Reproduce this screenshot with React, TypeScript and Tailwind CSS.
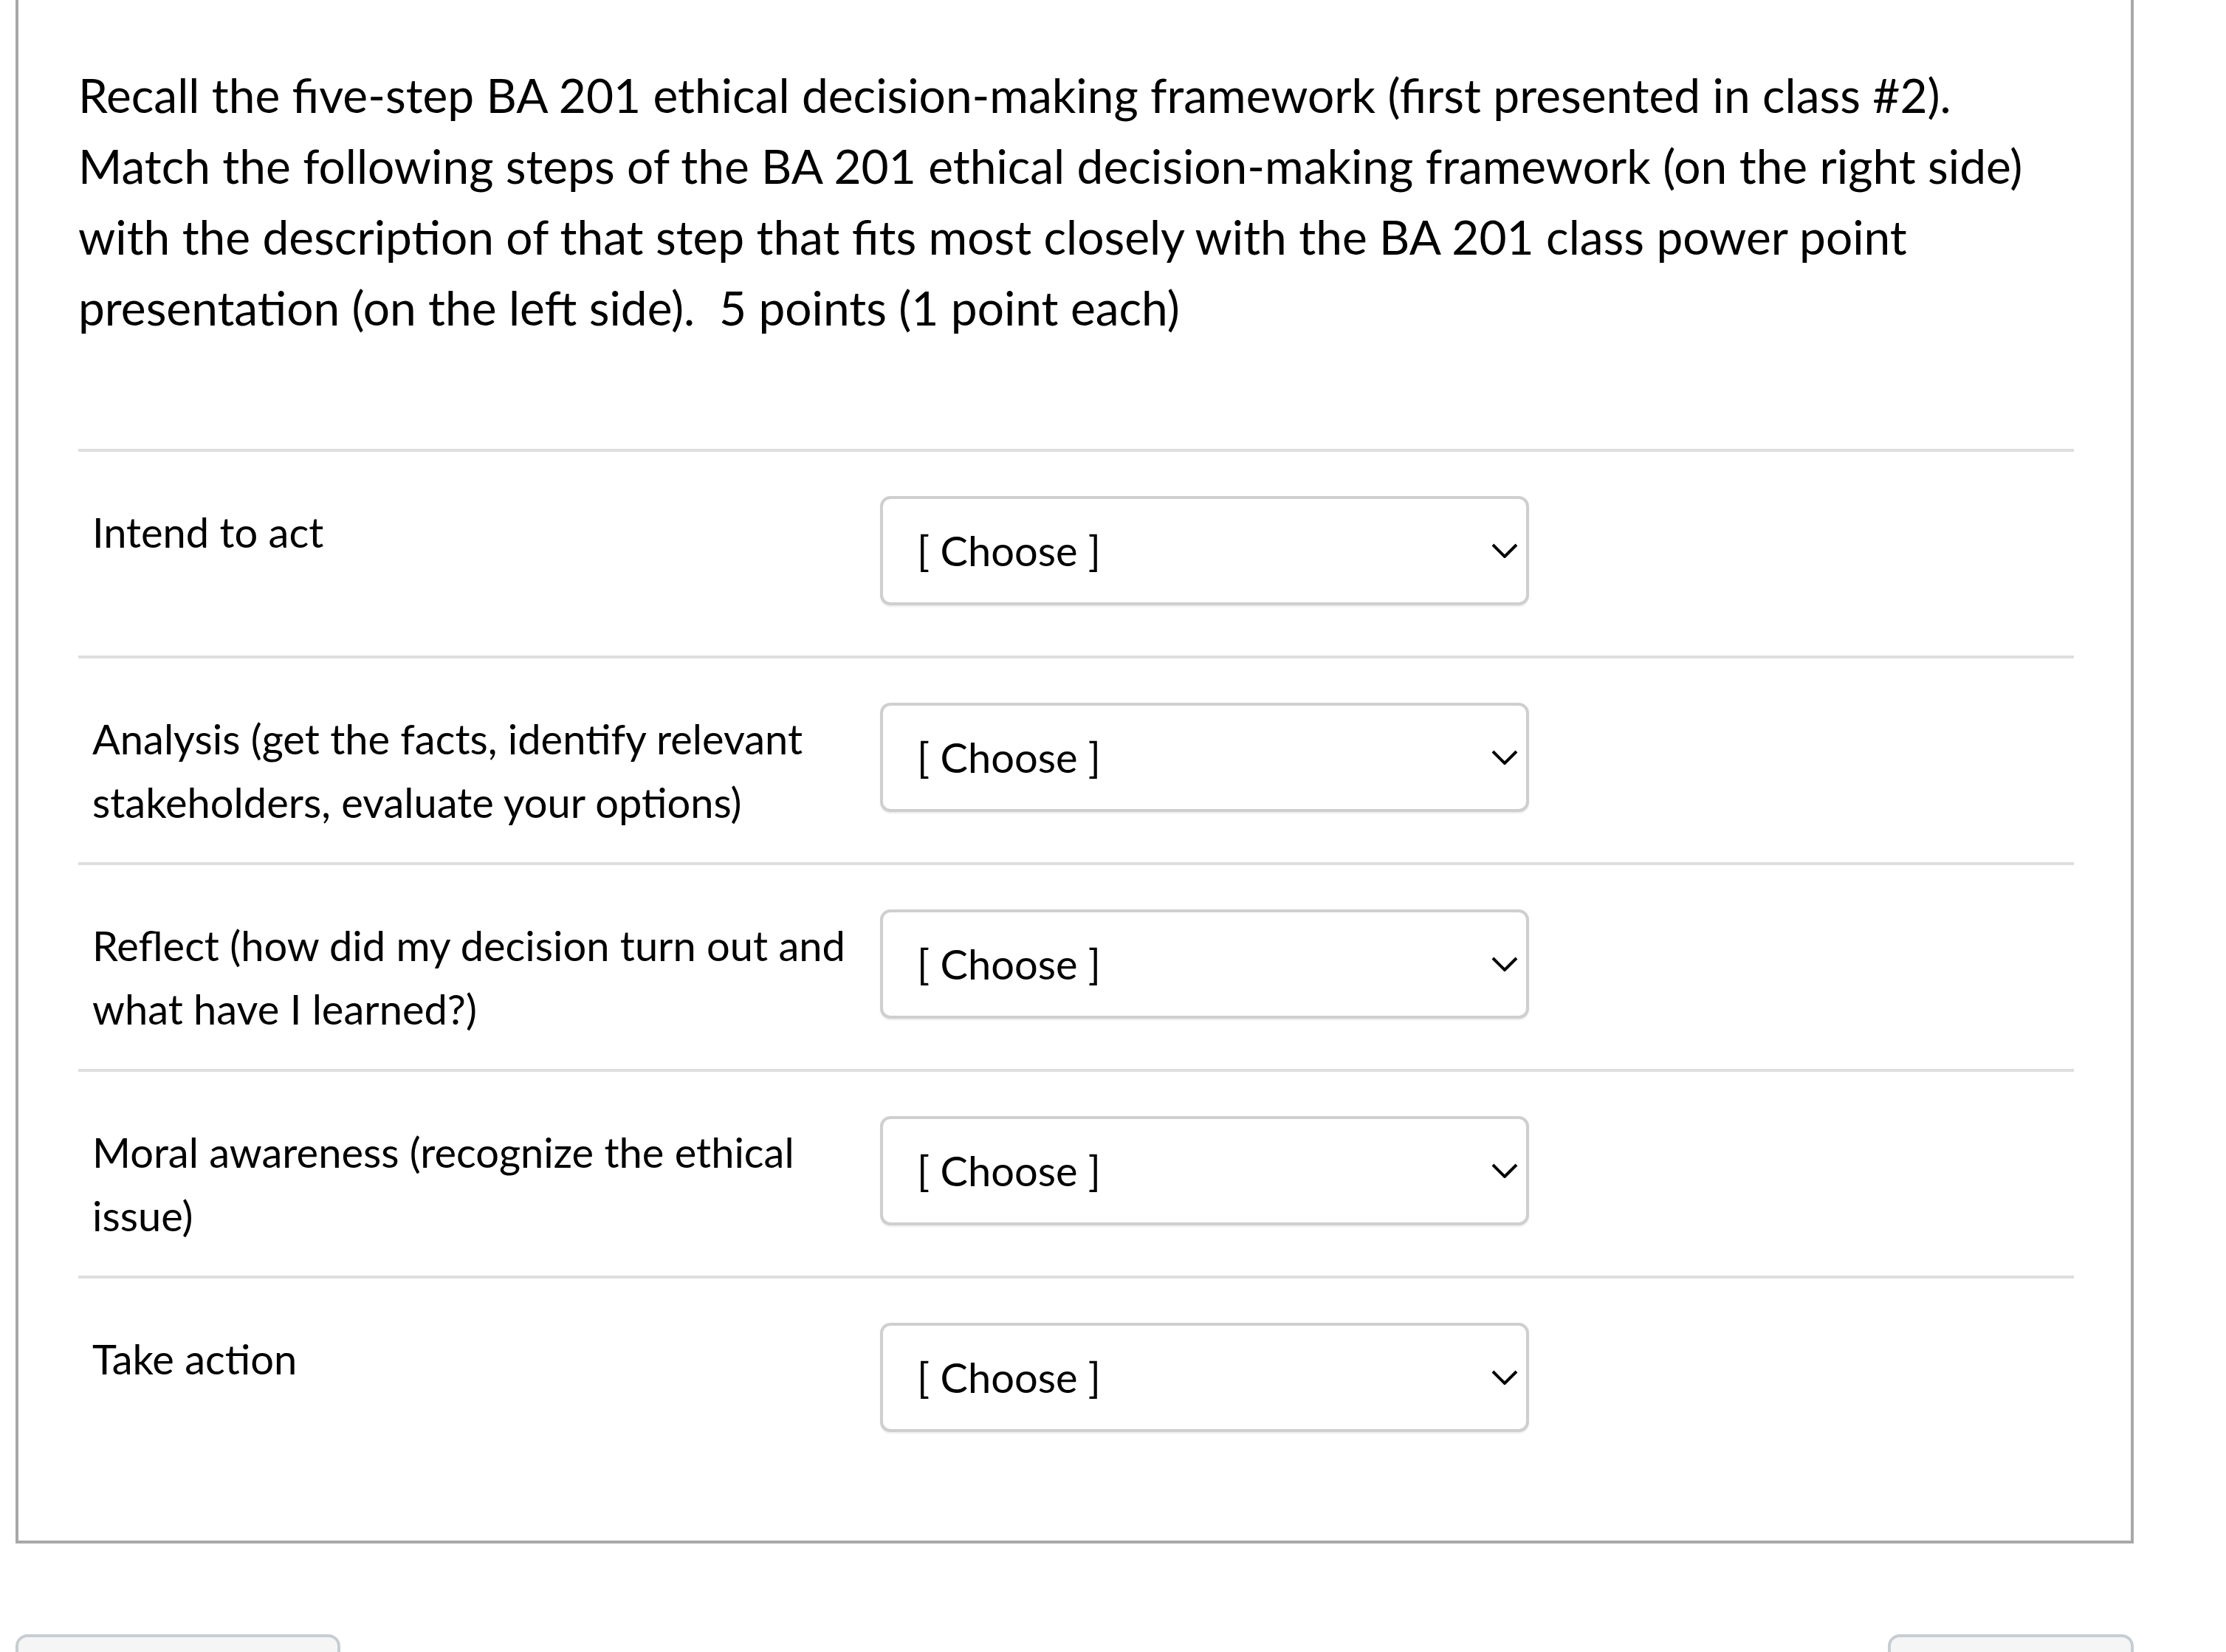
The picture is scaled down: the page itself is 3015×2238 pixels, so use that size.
const ROWS = [
  'Intend to act',
  'Analysis (get the facts, identify relevant stakeholders, evaluate your options)',
  'Reflect (how did my decision turn out and what have I learned?)',
  'Moral awareness (recognize the ethical issue)',
  'Take action',
];

const Chevron = () => (
  <svg width="36" height="20" viewBox="0 0 36 20" fill="none" className="shrink-0">
    <path d="M2 2 L18 18 L34 2" stroke="#000" strokeWidth="4" />
  </svg>
);

const ChooseSelect = () => (
  <div className="-mt-[4px] flex h-[148px] w-[879px] shrink-0 items-center justify-between rounded-[14px] border-4 border-[#cfcfcf] bg-white pl-[46px] pr-[11px] shadow-[0_2px_2px_rgba(0,0,0,0.08)]">
    <span className="text-[56px] leading-none text-black">[ Choose ]</span>
    <Chevron />
  </div>
);

export default function App() {
  return (
    <div
      className="h-[2238px] w-[3015px] overflow-hidden bg-white text-black"
      style={{ fontFamily: 'Lato, "Open Sans", sans-serif' }}
    >
      <div className="ml-[21px] w-[2869px] border-x-4 border-b-4 border-[#a8a8a8] pb-[79px] pl-[81px] pr-[77px] pt-[81px]">
        <p className="text-[64px] leading-[96px]">
          Recall the five-step BA 201 ethical decision-making framework (first presented in class #2).
          <br />
          Match the following steps of the BA 201 ethical decision-making framework (on the right side)
          <br />
          with the description of that step that fits most closely with the BA 201 class power point
          <br />
          presentation (on the left side).&nbsp; 5 points (1 point each)
        </p>

        <div className="mt-[143px]">
          {ROWS.map((label) => (
            <div key={label} className="flex h-[280px] items-start border-t-4 border-[#dedede] pt-[64px]">
              <div className="w-[1086px] shrink-0 pl-[19px] pr-[16px] pt-[2px] text-[56px] leading-[86px]">{label}</div>
              <ChooseSelect />
            </div>
          ))}
        </div>
      </div>

      <div className="mt-[123px] flex justify-between pl-[21px] pr-[125px]">
        <div className="h-[150px] w-[440px] rounded-t-[16px] border-4 border-[#c7cdd1] bg-[#f5f5f5]" />
        <div className="h-[150px] w-[333px] rounded-t-[16px] border-4 border-[#c7cdd1] bg-[#f5f5f5]" />
      </div>
    </div>
  );
}
